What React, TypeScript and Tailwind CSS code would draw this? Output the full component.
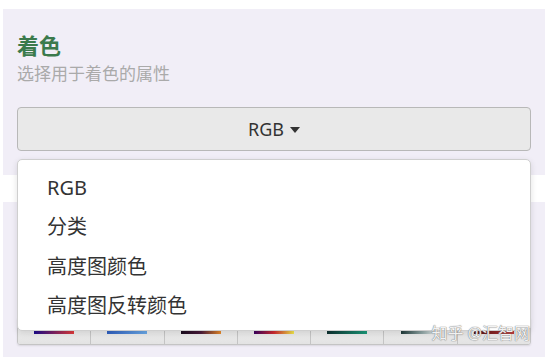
import React from "react";

const ramps = [
  "linear-gradient(to right, #1c0a8c, #e03a3a)",
  "linear-gradient(to right, #2f5fbf, #6aa8e6)",
  "linear-gradient(to right, #1a0c1e, #4a1a3a, #e88a2a)",
  "linear-gradient(to right, #3a0060, #d02a30, #f0e84a)",
  "linear-gradient(to right, #0e3030, #1a9a7a)",
  "linear-gradient(to right, #203a3a, #8aa0a0, #ffffff)",
  "linear-gradient(to right, #501010, #c03a3a)",
];

const options = ["RGB", "分类", "高度图颜色", "高度图反转颜色"];

export default function App() {
  return (
    <div
      className="w-[545px] h-[357px] overflow-hidden bg-white pt-[9px] pl-[3px] relative"
      style={{ fontFamily: '"Noto Sans", "Noto Sans CJK SC", sans-serif' }}
    >
      {/* Colour panel */}
      <div className="bg-[#f1eef7] pl-[14px] pr-[14px] pt-[22px] pb-[24px]">
        <h2 className="text-[22px] leading-[28px] font-bold text-[#3b7a4c]">着色</h2>
        <p className="mt-[3px] text-[17px] leading-[24px] text-[#aaaaaa]">选择用于着色的属性</p>
        <div className="relative mt-[21px]">
          <button className="w-full h-[44px] bg-[#e9e9e9] border border-[#b8b8b8] rounded-[4px] flex items-center justify-center gap-[6px] text-[18px] text-[#333]">
            <span>RGB</span>
            <span className="w-0 h-0 border-l-[5px] border-r-[5px] border-t-[6px] border-l-transparent border-r-transparent border-t-[#333] mt-[2px]" />
          </button>
          <ul className="absolute left-0 right-0 top-[52px] z-10 bg-white border border-[#cfcfcf] rounded-[5px] shadow-[0_2px_6px_rgba(0,0,0,0.12)] pt-[8px] pb-[4px]">
            {options.map((o) => (
              <li key={o} className="h-[39.5px] flex items-center pl-[29px] text-[20px] text-[#333]">
                {o}
              </li>
            ))}
          </ul>
        </div>
      </div>

      <div className="h-[27px] bg-white" />

      {/* Colour ramp panel */}
      <div className="bg-[#f1eef7] pl-[14px] pr-[14px] pt-[115px] h-[200px]">
        <div className="flex h-[28px] border border-[#c4c4c4] rounded-[3px] overflow-hidden shadow-[0_1px_2px_rgba(0,0,0,0.1)]">
          {ramps.map((r, i) => (
            <div
              key={i}
              className="flex-1 flex justify-center bg-gradient-to-b from-[#f3f3f3] to-[#e3e3e3] border-r border-[#c4c4c4] last:border-r-0 pt-[13px]"
            >
              <div className="w-[40px] h-[3px]" style={{ background: r }} />
            </div>
          ))}
        </div>
      </div>

      <div className="absolute right-[15px] bottom-[12px] z-20 text-[16px] text-white/90 [text-shadow:0_0_1px_#777,0_0_1px_#777]">
        知乎 @汇智网
      </div>
    </div>
  );
}
